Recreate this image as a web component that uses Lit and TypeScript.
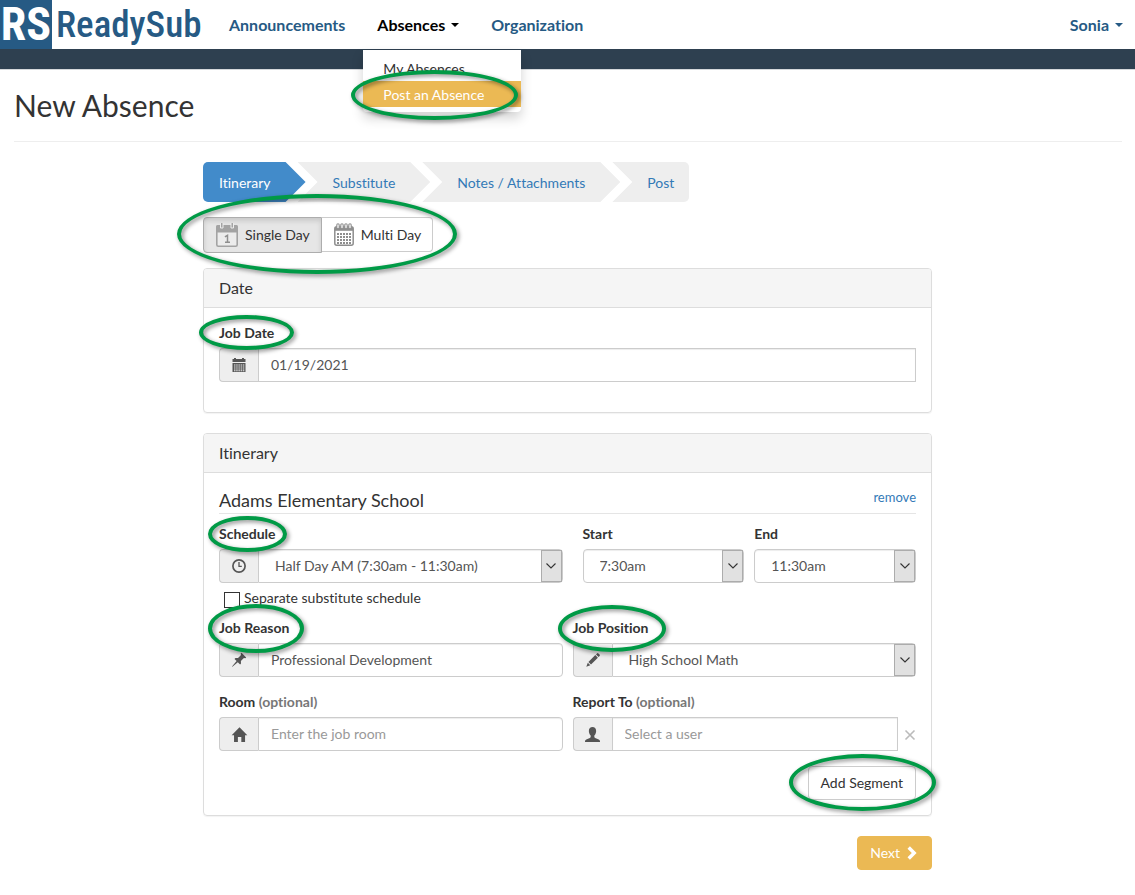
import { LitElement, html, svg, css, nothing, TemplateResult } from "lit";
import { customElement, state } from "lit/decorators.js";
import { classMap } from "lit/directives/class-map.js";

const icon = (body: TemplateResult, size = 14) => html`
  <svg class="icon" width=${size} height=${size} viewBox="0 0 14 14" aria-hidden="true">${body}</svg>
`;

const calendarIcon = icon(svg`
  <path fill="currentColor" fill-rule="evenodd" d="M.5 1H2V0h2v1h6V0h2v1h1.500v3H.5zM.5 5h13v9H.5zM2 6.500v1h1.500v-1zM4.200 6.500v1h1.500v-1zM6.400 6.500v1h1.500v-1zM8.600 6.500v1h1.500v-1zM10.800 6.500v1h1.500v-1zM2 8.500v1h1.500v-1zM4.200 8.500v1h1.500v-1zM6.400 8.500v1h1.500v-1zM8.600 8.500v1h1.500v-1zM10.800 8.500v1h1.500v-1zM2 10.500v1h1.500v-1zM4.200 10.500v1h1.500v-1zM6.400 10.500v1h1.500v-1zM8.600 10.500v1h1.500v-1zM10.800 10.500v1h1.500v-1zM2 12.300v.9h1.500v-.9zM4.200 12.300v.9h1.500v-.9zM6.400 12.300v.9h1.500v-.9zM8.600 12.300v.9h1.500v-.9zM10.800 12.300v.9h1.500v-.9z"/>
`);
const clockIcon = icon(svg`
  <circle cx="7" cy="7" r="6.100" fill="none" stroke="currentColor" stroke-width="1.700"/>
  <path d="M7 3v4.300h2.800" fill="none" stroke="currentColor" stroke-width="1.300"/>
`);
const pinIcon = icon(svg`
  <path fill="currentColor" d="M9.500-.2 14.200 4.500l-.8.8-1.500-.3-3 3 .1 2.600-.9.900-2.300-2.300L.4 13.800l-.4-.4 4.600-5.400L2.500 5.900l.9-.9 2.600.1 3-3L8.700.6z"/>
`);
const pencilIcon = icon(svg`
  <path fill="currentColor" d="M11 .4a1 1 0 0 1 1.400 0l1.200 1.200a1 1 0 0 1 0 1.400l-1 1L10 1.400zM9.300 2.100l2.600 2.600-6.900 6.900L2.400 9zM1.800 9.700l2.500 2.500L.3 13.700z"/>
`);
const homeIcon = icon(svg`
  <path fill="currentColor" d="M7 .2 14.300 7.600H12.200V14H8.700V9.300H5.500V14H1.900V7.600H-.3z"/>
`, 15);
const userIcon = icon(svg`
  <path fill="currentColor" d="M7 0c2 0 3.400 1.500 3.400 3.700 0 1.700-.7 3.300-1.700 4.200v1.300c0 .5.3.8.8 1l3.300 1.400c.8.4 1.200 1 1.200 1.800v.6H0v-.6c0-.8.4-1.400 1.200-1.800l3.300-1.400c.5-.2.8-.5.8-1V7.900C4.300 7 3.600 5.400 3.600 3.700 3.600 1.500 5 0 7 0z"/>
`, 15);
const chevronIcon = icon(svg`
  <path fill="currentColor" d="M2.500 2.700 4.900.300l6.700 6.700-6.700 6.700-2.400-2.400L6.800 7z"/>
`);

const singleDayIcon = html`
  <svg class="day-icon" width="22" height="24" viewBox="0 0 22 24" aria-hidden="true">
    <rect x=".8" y="2.800" width="20.400" height="20.400" rx="1.500" fill="#ececec" stroke="#a3a3a3" stroke-width="1.600"/>
    <path d="M0 9.500V4a2 2 0 0 1 2-2h18a2 2 0 0 1 2 2v5.500z" fill="#a3a3a3"/>
    <path d="M4.500 0v5h2.500V0M15 0v5h2.500V0" fill="#a3a3a3" stroke="#ececec"/>
    <path d="M8.900 13.900l2.600-1.500v7.200M9 19.300h5" fill="none" stroke="#8f8f8f" stroke-width="1.500"/>
  </svg>
`;
const multiDayIcon = html`
  <svg class="day-icon" width="20" height="23" viewBox="0 0 20 23" aria-hidden="true">
    <rect x=".8" y="3.800" width="18.400" height="18.400" rx="2" fill="#fff" stroke="#8e8e8e" stroke-width="1.500"/>
    <path d="M1 4h18v3.800H1z" fill="#8e8e8e"/>
    <g fill="#fff" stroke="#8e8e8e" stroke-width="1.100">
      <rect x="2.800" y=".7" width="2.400" height="5" rx="1.200"/>
      <rect x="6.800" y=".7" width="2.400" height="5" rx="1.200"/>
      <rect x="10.800" y=".7" width="2.400" height="5" rx="1.200"/>
      <rect x="14.800" y=".7" width="2.400" height="5" rx="1.200"/>
    </g>
    <path d="M3 11h14.500M3 14h14.500M3 17h14.500M3 20h14.500" stroke="#8e8e8e" stroke-width="2" stroke-dasharray="2 1"/>
  </svg>
`;

const STEPS = ["Itinerary", "Substitute", "Notes / Attachments", "Post"];

@customElement("app-root")
export class AppRoot extends LitElement {
  @state() private step = 0;
  @state() private multiDay = false;

  static styles = css`
    :host {
      display: block;
      min-height: 100vh;
      background: #fff;
      color: #333;
      font: 14px/20px Lato, "Liberation Sans", sans-serif;
      font-variant-ligatures: none;
    }
    *, *::before, *::after { box-sizing: border-box; }
    a { color: #337ab7; text-decoration: none; }
    button, input, select { font: inherit; font-variant-ligatures: none; margin: 0; }
    button { cursor: pointer; }
    .icon, .day-icon { display: block; flex: none; overflow: visible; }

    .topbar {
      display: flex;
      height: 49px;
      padding-right: 12px;
      font-size: 16px;
      font-weight: 700;
    }
    .brand {
      display: flex;
      align-items: center;
      width: 213px;
      color: #265a84;
      font-family: "Liberation Sans Narrow", "Roboto Condensed", "DejaVu Sans Condensed", sans-serif;
      font-size: 37px;
      font-weight: 500;
      line-height: 49px;
      white-space: nowrap;
    }
    .mark {
      display: flex;
      flex: none;
      justify-content: center;
      min-width: 52px;
      margin-right: 4px;
      background: #265a84;
      color: #fff;
      font-size: 46px;
      font-weight: 700;
    }
    .nav { display: flex; flex: 1; }
    .nav-item { position: relative; display: flex; }
    .nav-item:last-child { margin-left: auto; }
    .nav-link {
      display: flex;
      align-items: center;
      gap: 6px;
      padding: 1px 16px 0;
      color: #265a84;
    }
    .nav-item:last-child .nav-link { padding-right: 0; }
    .nav-link.open { color: #000; }
    .caret {
      border: 4px solid transparent;
      border-top-color: currentColor;
      border-bottom: 0;
    }
    .menu {
      position: absolute;
      z-index: 2;
      top: 50px;
      left: 2px;
      width: 158px;
      padding: 5px 0;
      background: #fff;
      border-radius: 0 0 4px 4px;
      box-shadow: 0 6px 12px rgba(0, 0, 0, .18);
      font-size: 14px;
      font-weight: 400;
    }
    .menu-link {
      position: relative;
      display: block;
      padding: 4px 20px 2px;
      color: #333;
    }
    .menu-link.current { background: #ebb954; color: #fff; }
    .band { height: 21px; background: #2e4050; border-bottom: 1px solid #d5d8db; }

    .page-title {
      margin: 19px 13px 20px 14px;
      padding-bottom: 19px;
      border-bottom: 1px solid #eee;
      font-size: 30px;
      font-weight: 400;
      line-height: 33px;
    }
    .content { max-width: 729px; margin: 0 auto; padding-bottom: 20px; }

    .wizard { display: flex; margin-bottom: 15px; }
    .step {
      height: 40px;
      padding: 2px 35px 0;
      border: 0;
      background: #eee;
      color: #337ab7;
      clip-path: polygon(0 0, calc(100% - 20px) 0, 100% 50%, calc(100% - 20px) 100%, 0 100%, 20px 50%);
    }
    .step + .step { margin-left: -8px; }
    .step:first-child {
      padding-left: 16px;
      border-radius: 5px 0 0 5px;
      clip-path: polygon(0 0, calc(100% - 20px) 0, 100% 50%, calc(100% - 20px) 100%, 0 100%);
    }
    .step:last-child {
      padding-right: 15px;
      border-radius: 0 5px 5px 0;
      clip-path: polygon(0 0, 100% 0, 100% 100%, 0 100%, 20px 50%);
    }
    .step.active { background: #428bca; color: #fff; }

    .day-toggle {
      position: relative;
      display: flex;
      align-items: flex-start;
      width: max-content;
      margin-bottom: 15px;
    }
    .day {
      display: flex;
      align-items: center;
      gap: 7px;
      padding: 5px 11px 5px 12px;
      border: 1px solid #ccc;
      background: #fff;
      color: #333;
    }
    .day:first-child { border-radius: 4px 0 0 4px; }
    .day:last-of-type { border-left: 0; border-radius: 0 4px 4px 0; }
    .day.active {
      border-color: #adadad;
      background: #e6e6e6;
      box-shadow: inset 0 3px 5px rgba(0, 0, 0, .125);
    }

    .panel {
      margin-bottom: 20px;
      border: 1px solid #ddd;
      border-radius: 4px;
      box-shadow: 0 1px 1px rgba(0, 0, 0, .05);
    }
    .panel-title {
      margin: 0;
      padding: 9px 15px;
      border-bottom: 1px solid #ddd;
      border-radius: 3px 3px 0 0;
      background: #f5f5f5;
      font-size: 16px;
      font-weight: 400;
      line-height: 20px;
    }
    .panel-body { padding: 15px; }

    .field { min-width: 0; margin-bottom: 15px; }
    .label { display: block; margin-bottom: 5px; font-weight: 700; }
    .label-text { position: relative; display: inline-block; }
    .muted { color: #777; }
    .group { display: flex; height: 34px; }
    .addon {
      display: flex;
      flex: none;
      align-items: center;
      justify-content: center;
      width: 39px;
      border: 1px solid #ccc;
      border-right: 0;
      border-radius: 4px 0 0 4px;
      background: #eee;
      color: #555;
    }
    .input, .select {
      width: 100%;
      min-width: 0;
      height: 34px;
      border: 1px solid #ccc;
      border-radius: 4px;
      background: #fff;
      box-shadow: inset 0 1px 1px rgba(0, 0, 0, .075);
      color: #555;
    }
    .input { padding: 0 12px 2px; }
    .input::placeholder { color: #999; opacity: 1; }
    .input.square { border-radius: 0; }
    .select { grid-area: 1 / 1; padding: 0 28px 0 16px; appearance: none; }
    .addon + .input, .addon + .picker > .select {
      border-top-left-radius: 0;
      border-bottom-left-radius: 0;
    }
    .picker { display: grid; flex: 1; min-width: 0; }
    .arrow {
      display: flex;
      grid-area: 1 / 1;
      align-items: center;
      justify-content: center;
      justify-self: end;
      width: 21px;
      margin: 1px 1px 1px 0;
      border: 1px solid #acacac;
      background: #e1e1e1;
      pointer-events: none;
    }

    .segment-head {
      display: flex;
      justify-content: space-between;
      margin-bottom: 10px;
      border-bottom: 1px solid #e5e5e5;
    }
    .segment-title { margin: 0; font-size: 18px; font-weight: 400; line-height: 25px; }
    .remove { font-size: 13px; line-height: 18px; }
    .row { display: grid; grid-template-columns: 1fr 1fr; column-gap: 10px; }
    .times { padding-left: 10px; }
    .schedule-row .field { margin-bottom: 5px; }
    .check { display: flex; gap: 4px; width: max-content; margin: 0 0 10px 5px; }
    .checkbox {
      width: 16px;
      height: 16px;
      margin-top: 4px;
      border: 1px solid #333;
      background: #fff;
      appearance: none;
    }
    .checkbox:checked { background: #337ab7; box-shadow: inset 0 0 0 2px #fff; }
    .clear {
      flex: none;
      width: 18px;
      padding: 2px 0 0 6px;
      border: 0;
      background: none;
      color: #bbb;
    }
    .actions { display: flex; justify-content: flex-end; }
    .btn {
      position: relative;
      display: flex;
      align-items: center;
      gap: 5px;
      height: 34px;
      padding: 0 12px;
      border: 1px solid #ccc;
      border-radius: 4px;
      background: #fff;
      color: #333;
    }
    .btn.primary { border-color: #ebb954; background: #ebb954; color: #fff; }

    .ring {
      position: absolute;
      z-index: 3;
      border: 4px solid #009a46;
      border-radius: 50%;
      filter: drop-shadow(2px 2px 2px rgba(0, 0, 0, .45));
      pointer-events: none;
    }
    .ring-menu { inset: -11px 3px -13px -12px; }
    .ring-toggle { inset: -23px -24px -21px -26px; }
    .ring-date { inset: -8px -20px -7px -20px; }
    .ring-schedule { inset: -8px -11px -8px -11px; }
    .ring-reason { inset: -14px -15px -15px -11px; }
    .ring-position { inset: -13px -18px -14px -15px; }
    .ring-add { inset: -13px -21px -12px -20px; }
  `;

  private ring(name: string) {
    return html`<span class="ring ring-${name}"></span>`;
  }

  private label(id: string, text: string, ring = "", optional = false) {
    return html`
      <label class="label" for=${id}
        ><span class="label-text">${text}${ring ? this.ring(ring) : nothing}</span>${optional
          ? html` <span class="muted">(optional)</span>`
          : nothing}</label
      >
    `;
  }

  private picker(id: string, value: string) {
    return html`
      <div class="picker">
        <select class="select" id=${id}><option>${value}</option></select>
        <span class="arrow">
          <svg width="10" height="6" viewBox="0 0 10 6" aria-hidden="true">
            <path d="M.5.500 5 5 9.500.500" fill="none" stroke="#333" stroke-width="1.100"/>
          </svg>
        </span>
      </div>
    `;
  }

  render() {
    return html`
      <header>
        <div class="topbar">
          <a class="brand" href="#"><span class="mark">RS</span><span>ReadySub</span></a>
          <nav class="nav">
            <div class="nav-item"><a class="nav-link" href="#">Announcements</a></div>
            <div class="nav-item">
              <a class="nav-link open" href="#">Absences <span class="caret"></span></a>
              <div class="menu">
                <a class="menu-link" href="#">My Absences</a>
                <a class="menu-link current" href="#">Post an Absence${this.ring("menu")}</a>
              </div>
            </div>
            <div class="nav-item"><a class="nav-link" href="#">Organization</a></div>
            <div class="nav-item">
              <a class="nav-link" href="#">Sonia <span class="caret"></span></a>
            </div>
          </nav>
        </div>
        <div class="band"></div>
      </header>

      <h1 class="page-title">New Absence</h1>

      <main class="content">
        <div class="wizard">
          ${STEPS.map(
            (name, i) => html`<button
              type="button"
              class=${classMap({ step: true, active: i === this.step })}
              @click=${() => (this.step = i)}
            >${name}</button>`
          )}
        </div>

        <div class="day-toggle">
          <button
            type="button"
            class=${classMap({ day: true, active: !this.multiDay })}
            @click=${() => (this.multiDay = false)}
          >${singleDayIcon}Single Day</button>
          <button
            type="button"
            class=${classMap({ day: true, active: this.multiDay })}
            @click=${() => (this.multiDay = true)}
          >${multiDayIcon}Multi Day</button>
          ${this.ring("toggle")}
        </div>

        <section class="panel">
          <h2 class="panel-title">Date</h2>
          <div class="panel-body">
            <div class="field">
              ${this.label("job-date", "Job Date", "date")}
              <div class="group">
                <span class="addon">${calendarIcon}</span>
                <input class="input square" id="job-date" type="text" value="01/19/2021">
              </div>
            </div>
          </div>
        </section>

        <section class="panel">
          <h2 class="panel-title">Itinerary</h2>
          <div class="panel-body">
            <div class="segment-head">
              <h3 class="segment-title">Adams Elementary School</h3>
              <a class="remove" href="#">remove</a>
            </div>
            <div class="row schedule-row">
              <div class="field">
                ${this.label("schedule", "Schedule", "schedule")}
                <div class="group">
                  <span class="addon">${clockIcon}</span>
                  ${this.picker("schedule", "Half Day AM (7:30am - 11:30am)")}
                </div>
              </div>
              <div class="row times">
                <div class="field">
                  ${this.label("start", "Start")}
                  ${this.picker("start", "7:30am")}
                </div>
                <div class="field">
                  ${this.label("end", "End")}
                  ${this.picker("end", "11:30am")}
                </div>
              </div>
            </div>
            <label class="check">
              <input class="checkbox" type="checkbox">
              <span>Separate substitute schedule</span>
            </label>
            <div class="row">
              <div class="field">
                ${this.label("reason", "Job Reason", "reason")}
                <div class="group">
                  <span class="addon">${pinIcon}</span>
                  <input class="input" id="reason" type="text" value="Professional Development">
                </div>
              </div>
              <div class="field">
                ${this.label("position", "Job Position", "position")}
                <div class="group">
                  <span class="addon">${pencilIcon}</span>
                  ${this.picker("position", "High School Math")}
                </div>
              </div>
              <div class="field">
                ${this.label("room", "Room", "", true)}
                <div class="group">
                  <span class="addon">${homeIcon}</span>
                  <input class="input" id="room" type="text" placeholder="Enter the job room">
                </div>
              </div>
              <div class="field">
                ${this.label("report-to", "Report To", "", true)}
                <div class="group">
                  <span class="addon">${userIcon}</span>
                  <input class="input square" id="report-to" type="text" placeholder="Select a user">
                  <button class="clear" type="button" aria-label="Clear">
                    <svg class="icon" width="12" height="12" viewBox="0 0 12 12" aria-hidden="true">
                      <path d="M1.500 1.500l9 9m0-9l-9 9" stroke="currentColor" stroke-width="1.600"/>
                    </svg>
                  </button>
                </div>
              </div>
            </div>
            <div class="actions">
              <button class="btn" type="button">Add Segment${this.ring("add")}</button>
            </div>
          </div>
        </section>

        <div class="actions">
          <button class="btn primary" type="button">Next ${chevronIcon}</button>
        </div>
      </main>
    `;
  }
}
